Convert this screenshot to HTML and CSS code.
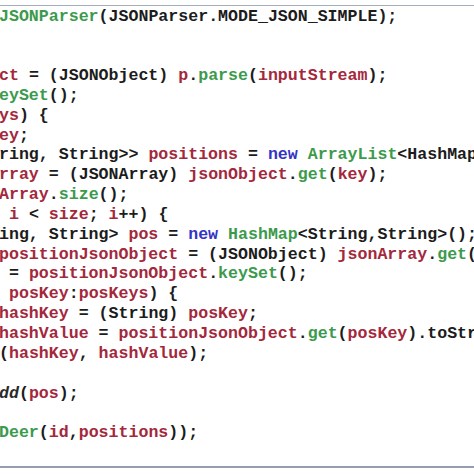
FILE: index.html
```html
<!DOCTYPE html>
<html>
<head>
<meta charset="utf-8">
<link rel="stylesheet" href="styles.css">
</head>
<body>
<div class="screen">
  <div class="editor">
<pre class="code"><span class="m">JSONParser</span>(JSONParser.MODE_JSON_SIMPLE);


<span class="v">ct</span> = (JSONObject) <span class="v">p</span>.<span class="m">parse</span>(<span class="v">inputStream</span>);
<span class="m">eySet</span>();
<span class="v">ys</span>) {
<span class="v">ey</span>;
ring, String&gt;&gt; <span class="v">positions</span> = <span class="k">new</span> <span class="m">ArrayList</span>&lt;HashMap&lt;String, String&gt;&gt;();
<span class="v">rray</span> = (JSONArray) <span class="v">jsonObject</span>.<span class="m">get</span>(<span class="v">key</span>);
<span class="v">Array</span>.<span class="m">size</span>();
 <span class="v">i</span> &lt; <span class="v">size</span>; <span class="v">i</span>++) {
ing, String&gt; <span class="v">pos</span> = <span class="k">new</span> <span class="m">HashMap</span>&lt;String,String&gt;();
<span class="v">positionJsonObject</span> = (JSONObject) <span class="v">jsonArray</span>.<span class="m">get</span>(<span class="v">i</span>);
 = <span class="v">positionJsonObject</span>.<span class="m">keySet</span>();
 <span class="v">posKey</span>:<span class="v">posKeys</span>) {
<span class="v">hashKey</span> = (String) <span class="v">posKey</span>;
<span class="v">hashValue</span> = <span class="v">positionJsonObject</span>.<span class="m">get</span>(<span class="v">posKey</span>).toString();
(<span class="v">hashKey</span>, <span class="v">hashValue</span>);

<span class="it">dd</span>(<span class="v">pos</span>);

<span class="m">Deer</span>(<span class="v">id</span>,<span class="v">positions</span>));</pre>
  </div>
</div>
</body>
</html>
```

FILE: styles.css
```css
html, body {
  margin: 0;
  padding: 0;
  background: #ffffff;
}

.screen {
  width: 474px;
  height: 474px;
  padding-top: 5px;
  box-sizing: border-box;
  overflow: hidden;
  background: #ffffff;
}

.editor {
  height: 463px;
  border-top: 1px solid #a3adbb;
  border-bottom: 2px solid #939eae;
  overflow: hidden;
  box-sizing: border-box;
}

.code {
  margin: 0;
  padding: 0.5px 0 0 0;
  margin-left: -1px;
  font-family: "Liberation Mono", "Courier New", monospace;
  font-weight: bold;
  font-size: 16.6px;
  line-height: 19.85px;
  color: #1c1c1c;
  white-space: pre;
}

.v {
  color: #a3283c;
}

.m {
  color: #3c9a4c;
}

.k {
  color: #3434c4;
}

.it {
  font-style: italic;
  color: #2a2a2a;
}
```
